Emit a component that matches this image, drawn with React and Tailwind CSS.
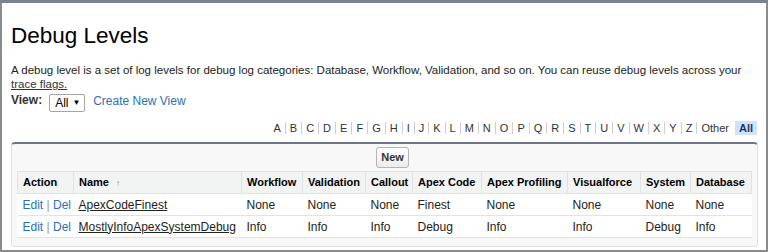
import React from "react";

const letters = "ABCDEFGHIJKLMNOPQRSTUVWXYZ".split("");

const columns = [
  { label: "Action", w: "w-[56px]" },
  { label: "Name", w: "w-[168px]" },
  { label: "Workflow", w: "w-[61px]" },
  { label: "Validation", w: "w-[63px]" },
  { label: "Callout", w: "w-[47px]" },
  { label: "Apex Code", w: "w-[69px]" },
  { label: "Apex Profiling", w: "w-[86px]" },
  { label: "Visualforce", w: "w-[73px]" },
  { label: "System", w: "w-[50px]" },
  { label: "Database", w: "w-[61px]" },
];

const rows = [
  ["ApexCodeFinest", "None", "None", "None", "Finest", "None", "None", "None", "None"],
  ["MostlyInfoApexSystemDebug", "Info", "Info", "Info", "Debug", "Info", "Info", "Debug", "Info"],
];

export default function App() {
  return (
    <div
      className="h-[252px] w-[768px] overflow-hidden bg-white border-t-[3px] border-t-[#7b8193] border-x-2 border-b-2 border-x-[#8c8c8c] border-b-[#8c8c8c] text-black"
      style={{ fontFamily: "'Liberation Sans', Arial, sans-serif" }}
    >
      <div className="pl-[9px] pr-[8px]">
        {/* 제목 */}
        <h1 className="pt-[19px] text-[22.5px] leading-[28px] font-normal">Debug Levels</h1>

        {/* 설명 */}
        <p className="mt-[13px] text-[11.5px] leading-[14px] text-[#222]">
          A debug level is a set of log levels for debug log categories: Database, Workflow, Validation, and so on. You can
          reuse debug levels across your{" "}
          <a className="underline text-[#333]">trace flags.</a>
        </p>

        {/* 보기 선택 */}
        <div className="flex items-start mt-[2px] text-[12px] leading-[14px]">
          <span className="font-bold text-[#333]">View:</span>
          <div className="ml-[7px] mt-[1px] flex items-center h-[18px] w-[36px] border border-[#a5a5a5] rounded-[2px] bg-white pl-[5px] text-[12px]">
            All
            <span className="ml-[4px] text-[8px]">▼</span>
          </div>
          <a className="ml-[8px] mt-[1px] text-[#2a6fb9]">Create New View</a>
        </div>

        {/* 알파벳 */}
        <div className="flex justify-end items-center mt-[9px] pr-[1px] text-[11px] leading-[14px] text-[#333]">
          {letters.map((l) => (
            <React.Fragment key={l}>
              <span className="px-[4px]">{l}</span>
              <span className="w-px h-[12px] bg-[#cfcfcf]" />
            </React.Fragment>
          ))}
          <span className="px-[4px]">Other</span>
          <span className="ml-[2px] px-[4px] bg-[#cfe2f7] font-bold text-[#15396e]">All</span>
        </div>

        {/* 목록 */}
        <div className="mt-[7px] border-t-2 border-t-[#6f7689] border-x border-b border-[#e0e0e0] rounded-[4px] bg-[#f8f8f8] px-[5px] pb-[8px]">
          <div className="flex justify-center pt-[3px] pb-[3px]">
            <button className="ml-[16px] h-[21px] px-[4px] border border-[#b5b5b5] rounded-[3px] bg-gradient-to-b from-white to-[#ececec] text-[11px] font-bold text-[#333]">
              New
            </button>
          </div>
          <table className="w-[734px] border-collapse table-fixed bg-white text-[12px]">
            <thead>
              <tr className="bg-[#f2f3f3] h-[22px]">
                {columns.map((c) => (
                  <th
                    key={c.label}
                    className={`${c.w} text-left font-bold text-[11px] px-[5px] border border-[#e0e3e5] text-black`}
                  >
                    {c.label}
                    {c.label === "Name" && <span className="ml-[7px] text-[8px] text-[#888]">↑</span>}
                  </th>
                ))}
              </tr>
            </thead>
            <tbody>
              {rows.map((r) => (
                <tr key={r[0]} className="h-[22px] border-b border-[#e3e3e3]">
                  <td className="px-[5px] text-[#2a6fb9] whitespace-nowrap">
                    Edit <span className="text-[#999]">|</span> Del
                  </td>
                  <td className="px-[5px]">
                    <a className="underline text-[#222]">{r[0]}</a>
                  </td>
                  {r.slice(1).map((v, i) => (
                    <td key={i} className="px-[5px] text-[#222]">
                      {v}
                    </td>
                  ))}
                </tr>
              ))}
            </tbody>
          </table>
        </div>
      </div>
    </div>
  );
}
